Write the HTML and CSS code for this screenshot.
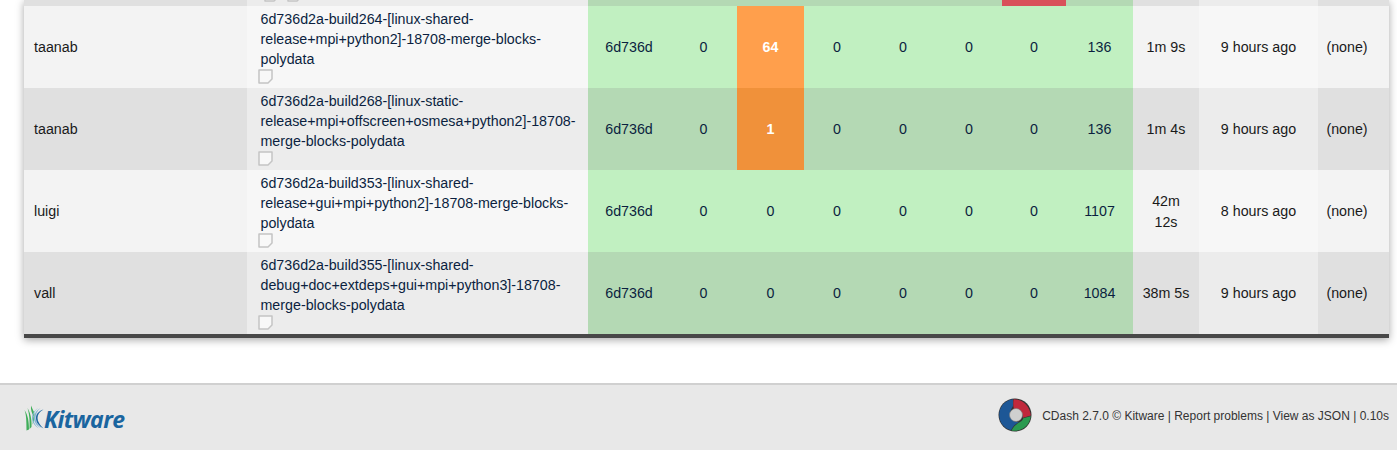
FILE: index.html
```html
<!DOCTYPE html>
<html lang="en">
<head>
<meta charset="utf-8">
<title>CDash</title>
<link rel="stylesheet" href="styles.css">
</head>
<body>
<main class="sheet">
<table class="builds">
<colgroup>
<col class="c-site"><col class="c-build"><col class="c-rev"><col class="c-a"><col class="c-a"><col class="c-b"><col class="c-b"><col class="c-b"><col class="c-n2"><col class="c-a"><col class="c-time"><col class="c-ago"><col class="c-lab">
</colgroup>
<tbody>
<tr class="even clip">
<td class="site"></td>
<td class="build"><div class="frag"><svg class="note" viewBox="0 0 15 15"><path d="M1 1h13v9l-4 4H1z"/></svg><svg class="note" viewBox="0 0 15 15"><path d="M1 1h13v9l-4 4H1z"/></svg></div></td>
<td class="ok"></td><td class="ok"></td><td class="ok"></td><td class="ok"></td><td class="ok"></td><td class="ok"></td><td class="bad"></td><td class="ok"></td>
<td class="time"></td><td class="ago"></td><td class="lab"></td>
</tr>
<tr class="odd">
<td class="site">taanab</td>
<td class="build"><a class="name" href="#">6d736d2a-build264-[linux-shared-release+mpi+python2]-18708-merge-blocks-polydata</a><svg class="note" viewBox="0 0 15 15"><path d="M1 1h13v9l-4 4H1z"/></svg></td>
<td class="ok">6d736d</td><td class="ok">0</td><td class="warn">64</td><td class="ok">0</td><td class="ok">0</td><td class="ok">0</td><td class="ok">0</td><td class="ok">136</td>
<td class="time">1m 9s</td><td class="ago">9 hours ago</td><td class="lab">(none)</td>
</tr>
<tr class="even">
<td class="site">taanab</td>
<td class="build"><a class="name" href="#">6d736d2a-build268-[linux-static-release+mpi+offscreen+osmesa+python2]-18708-merge-blocks-polydata</a><svg class="note" viewBox="0 0 15 15"><path d="M1 1h13v9l-4 4H1z"/></svg></td>
<td class="ok">6d736d</td><td class="ok">0</td><td class="warn">1</td><td class="ok">0</td><td class="ok">0</td><td class="ok">0</td><td class="ok">0</td><td class="ok">136</td>
<td class="time">1m 4s</td><td class="ago">9 hours ago</td><td class="lab">(none)</td>
</tr>
<tr class="odd">
<td class="site">luigi</td>
<td class="build"><a class="name" href="#">6d736d2a-build353-[linux-shared-release+gui+mpi+python2]-18708-merge-blocks-polydata</a><svg class="note" viewBox="0 0 15 15"><path d="M1 1h13v9l-4 4H1z"/></svg></td>
<td class="ok">6d736d</td><td class="ok">0</td><td class="ok">0</td><td class="ok">0</td><td class="ok">0</td><td class="ok">0</td><td class="ok">0</td><td class="ok">1107</td>
<td class="time">42m 12s</td><td class="ago">8 hours ago</td><td class="lab">(none)</td>
</tr>
<tr class="even">
<td class="site">vall</td>
<td class="build"><a class="name" href="#">6d736d2a-build355-[linux-shared-debug+doc+extdeps+gui+mpi+python3]-18708-merge-blocks-polydata</a><svg class="note" viewBox="0 0 15 15"><path d="M1 1h13v9l-4 4H1z"/></svg></td>
<td class="ok">6d736d</td><td class="ok">0</td><td class="ok">0</td><td class="ok">0</td><td class="ok">0</td><td class="ok">0</td><td class="ok">0</td><td class="ok">1084</td>
<td class="time">38m 5s</td><td class="ago">9 hours ago</td><td class="lab">(none)</td>
</tr>
</tbody>
</table>
</main>
<footer class="foot">
<div class="kitware">
<svg class="k-mark" viewBox="0 0 20 26" aria-hidden="true">
<path class="k-g" d="M.5 5C2 9 2.500 14 2.500 25.500L5 24.500C5 17 4 10 .5 5z"/>
<path class="k-g" d="M3.500 3C5 8 6 14 5.500 24L7.500 22C8 15 6.500 8 3.500 3z"/>
<path class="k-g" d="M7 .5C6.500 5 8 8.500 9.500 11L8.500 20C10.500 15 11 10 10 7 9 5 8 3 7 .5z"/>
<path class="k-l" d="M14 3C10.500 6 9 9.500 9 13s2 7 6 10.500C11 21 8 17.500 8 13S10 6 14 3z"/>
<path class="k-l" d="M16.500 3C13 6 11.500 9.500 11.500 13s2 7 5.500 10C13 21 10 17.500 10 13S12.500 5.500 16.500 3z"/>
<path class="k-b" d="M19.500 4.500C15.500 6.500 13.500 9.500 13.500 13s2.500 7 6 10.500C15 21 12 17.500 12 13S15 6 19.500 4.500z"/>
</svg>
<span class="k-word">Kitware</span>
</div>
<div class="meta">
<svg class="cd-mark" viewBox="0 0 34 34" aria-hidden="true">
<circle cx="17" cy="17" r="16.500" fill="#333"/>
<path fill="#1d5796" d="M15 1.200C7 2 1.200 8.800 1.200 17c0 7.500 5 13.500 11.800 15.200 2-4 5-6.500 8-8.200-4 .5-9-3-9-7.500 0-3 1.500-6 3-8.500z"/>
<path fill="#c0283c" d="M15.600 1.200C24 1 32 8 32.800 17.500L25 19.800c0-4.500-3.500-8.300-9-8.800-1-3-.8-6.500-.4-9.800z"/>
<path fill="#2a9a50" d="M32.700 18.300C32 26.500 25 32.800 17 32.800c-1.200 0-2.600-.1-3.400-.4 2-4 5-6.500 8.400-8.400 2-.8 3-2.400 3.200-3.800z"/>
<circle cx="18" cy="17" r="6.500" fill="#cfcfcf" stroke="#777" stroke-width=".6"/>
</svg>
<p class="meta-text">CDash 2.7.0 © <a href="#">Kitware</a> | <a href="#">Report problems</a> | <a href="#">View as JSON</a> | 0.10s</p>
</div>
</footer>
</body>
</html>
```
FILE: styles.css
```css
* { box-sizing: border-box; }
html, body { margin: 0; height: 450px; overflow: hidden; background: #fff; }
body { font-family: "Liberation Sans", Arial, sans-serif; font-size: 14.25px; line-height: 20.3px; color: #1a1a1a; display: flex; flex-direction: column; }
.sheet { padding-left: 24px; padding-right: 8px; height: 383px; }
.builds { width: 1365px; table-layout: fixed; border-collapse: separate; border-spacing: 0; border-bottom: 4px solid #484848; box-shadow: 0 2px 8px rgba(0,0,0,.35); }
.c-site { width: 223px; } .c-build { width: 341px; } .c-rev { width: 82px; } .c-a { width: 67px; } .c-b { width: 66px; } .c-n2 { width: 64px; }
.c-time { width: 66px; } .c-ago { width: 119px; } .c-lab { width: 71px; }
.builds td { padding: 1px 0 0; height: 82px; text-align: center; vertical-align: middle; }
.builds tr.clip td { height: 6px; padding: 0; line-height: 0; font-size: 0; }
.builds td.site { text-align: left; padding-left: 10px; }
.builds td.build { text-align: left; padding: 2.500px 4px 0 13.500px; vertical-align: top; }
.builds tr.clip td.build { padding: 0 0 0 17px; vertical-align: top; }
.builds td.lab { padding-right: 13px; }
.name { display: block; color: #0b1f3f; text-decoration: none; }
.note { display: block; width: 15px; height: 15px; margin: -.500px 0 0 -2.500px; }
.note path { fill: #f8f8f8; stroke: #c4c4c4; stroke-width: 1.500; stroke-linejoin: round; }
.frag { display: flex; gap: 8px; height: 2px; overflow: hidden; }
.frag .note { margin: -13px 0 0; }
.odd .site, .odd .time, .odd .lab { background: #f3f3f3; }
.odd .build, .odd .ago { background: #f7f7f7; }
.even .site, .even .time, .even .lab { background: #e0e0e0; }
.even .build, .even .ago { background: #ececec; }
.odd .ok { background: #c1f0c1; color: #0b1f3f; }
.even .ok { background: #b4d9b4; color: #0b1f3f; }
.builds td.time { padding: 1px 8px 0; }
.warn { font-weight: bold; color: #fff; }
.odd .warn { background: #ff9f4c; }
.even .warn { background: #f0913a; }
.even .bad { background: #d9505a; }
.foot { flex: 1; background: #e8e8e8; border-top: 2px solid #d0d0d0; display: flex; justify-content: space-between; align-items: center; padding: 0 8px 3px 24px; }
.kitware { display: flex; align-items: center; margin-top: 3px; }
.k-mark { width: 20px; height: 26px; display: block; }
.k-g { fill: #3fae5a; }
.k-b { fill: #1a659f; }
.k-l { fill: #7fb3d5; }
.k-word { font-family: "Open Sans", sans-serif; font-style: italic; font-weight: 700; font-size: 23px; line-height: 26px; color: #1a659f; margin-top: 3px; letter-spacing: -.6px; }
.meta { display: flex; align-items: center; gap: 10px; }
.cd-mark { width: 34px; height: 34px; display: block; position: relative; top: -1px; }
.meta-text { margin: 0; font-size: 12px; color: #333; }
.meta-text a { color: #333; text-decoration: none; }
```
